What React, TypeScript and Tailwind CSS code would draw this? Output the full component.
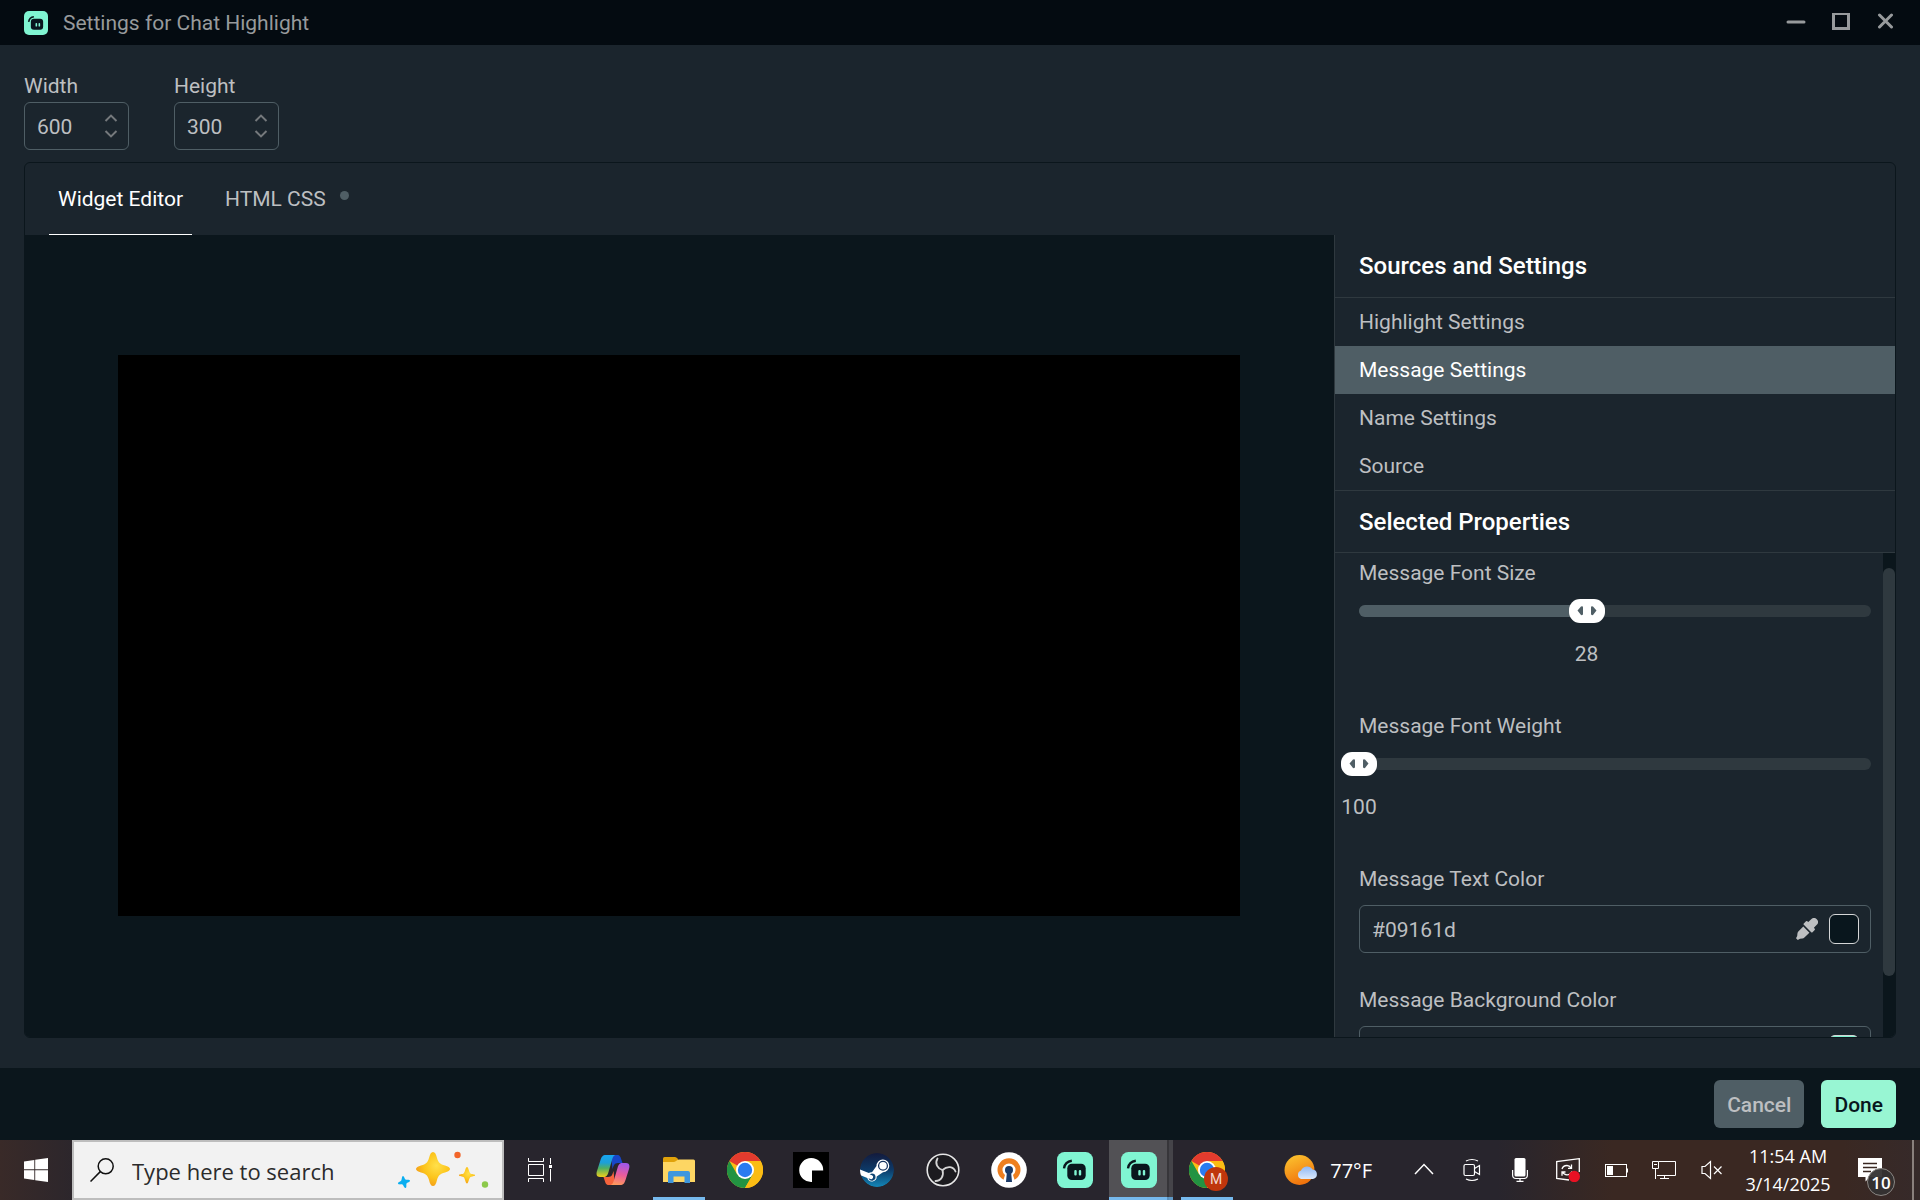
import React, { useState } from 'react';

type TabId = 'editor' | 'code';

const SOURCES = ['Highlight Settings', 'Message Settings', 'Name Settings', 'Source'];

const StreamlabsIcon: React.FC<{ className?: string }> = ({ className }) => (
  <svg viewBox="0 0 36 36" className={className} aria-hidden="true">
    <rect width="36" height="36" rx="7.5" fill="#80f5d2" />
    <path d="M7 16.4C7.6 12 10.400 9.200 14.800 8.700" fill="none" stroke="#09161d" strokeWidth="2.4" />
    <rect x="10.300" y="11.700" width="18.400" height="16.400" rx="4.600" fill="#09161d" />
    <rect x="17.300" y="18" width="2.400" height="5.400" rx="1" fill="#80f5d2" />
    <rect x="21.800" y="18" width="2.400" height="5.400" rx="1" fill="#80f5d2" />
  </svg>
);

const ChromeIcon: React.FC = () => (
  <svg viewBox="0 0 36 36" className="size-9" aria-hidden="true">
    <circle cx="18" cy="18" r="18" fill="#fbbc14" />
    <path d="M18 18 2.410 9A18 18 0 0 1 33.590 9Z" fill="#e33b2e" />
    <path d="M2.410 9A18 18 0 0 0 18 36L25.800 22.500 18 18 10.200 22.500Z" fill="#229342" />
    <path d="M18 9H33.590A18 18 0 0 1 18 36L25.800 22.500Z" fill="#fbbc14" />
    <circle cx="18" cy="18" r="9" fill="#fff" />
    <circle cx="18" cy="18" r="7.200" fill="#2a7bf0" />
  </svg>
);

const TitleBar: React.FC = () => (
  <header className="flex h-[45px] items-center bg-[#040b11] px-6 text-[#979a9c]">
    <StreamlabsIcon className="mr-[15px] size-6" />
    <h1 className="flex-1 leading-6">Settings for Chat Highlight</h1>
    <div className="flex items-center gap-[25px]">
      <button type="button" aria-label="Minimize">
        <svg viewBox="0 0 20 20" className="size-5" aria-hidden="true">
          <path d="M2 9H18" stroke="currentColor" strokeWidth="3" strokeLinecap="round" />
        </svg>
      </button>
      <button type="button" aria-label="Maximize">
        <svg viewBox="0 0 20 20" className="size-5" aria-hidden="true">
          <rect x="2.500" y="0.500" width="15" height="15" fill="none" stroke="currentColor" strokeWidth="3" />
        </svg>
      </button>
      <button type="button" aria-label="Close">
        <svg viewBox="0 0 20 20" className="size-5" aria-hidden="true">
          <path d="M3.500 2 15.500 14M15.500 2 3.500 14" stroke="currentColor" strokeWidth="3" strokeLinecap="round" />
        </svg>
      </button>
    </div>
  </header>
);

interface SizeFieldProps {
  id: string;
  label: string;
  value: number;
  onChange: (value: number) => void;
}

const SizeField: React.FC<SizeFieldProps> = ({ id, label, value, onChange }) => (
  <div className="w-[105px]">
    <label htmlFor={id} className="block h-6 leading-6">{label}</label>
    <div className="mt-1 flex h-12 items-center rounded-md border border-[#4f5e65] pr-[10px] pl-3">
      <input
        id={id}
        type="text"
        inputMode="numeric"
        value={value}
        onChange={(e) => onChange(Number(e.target.value) || 0)}
        className="w-0 flex-1 bg-transparent pt-px outline-none"
      />
      <div className="flex flex-col gap-2 text-[#75797c]">
        <button type="button" aria-label={`Increase ${label}`} onClick={() => onChange(value + 1)}>
          <svg viewBox="0 0 14 8" className="h-2 w-[14px]" aria-hidden="true">
            <path d="M1.500 7 7 1.600 12.500 7" fill="none" stroke="currentColor" strokeWidth="2" />
          </svg>
        </button>
        <button type="button" aria-label={`Decrease ${label}`} onClick={() => onChange(value - 1)}>
          <svg viewBox="0 0 14 8" className="h-2 w-[14px]" aria-hidden="true">
            <path d="M1.500 1 7 6.400 12.500 1" fill="none" stroke="currentColor" strokeWidth="2" />
          </svg>
        </button>
      </div>
    </div>
  </div>
);

interface SliderFieldProps {
  id: string;
  label: string;
  min: number;
  max: number;
  step: number;
  value: number;
  onChange: (value: number) => void;
}

const SliderField: React.FC<SliderFieldProps> = ({ id, label, min, max, step, value, onChange }) => {
  const percent = `${((value - min) / (max - min)) * 100}%`;

  return (
    <div className="h-[153px]">
      <label htmlFor={id} className="block h-6 leading-6">{label}</label>
      <div className="relative mt-5 h-3 rounded-full bg-[#2f393f]">
        <div className="h-3 rounded-full bg-[#4f5e65]" style={{ width: percent }} />
        <div
          className="absolute -top-[6px] flex h-6 w-9 -translate-x-1/2 items-center justify-center rounded-[11px] bg-white"
          style={{ left: percent }}
        >
          <svg viewBox="0 0 20 10" className="h-[10px] w-5" aria-hidden="true">
            <path d="M0.500 4.500 4 0.500Q6 -0.500 6 1.500V8Q6 9.500 4 9ZM19.500 4.500 16 0.500Q14 -0.500 14 1.500V8Q14 9.500 16 9Z" fill="#4f5e65" />
          </svg>
        </div>
        <input
          id={id}
          type="range"
          min={min}
          max={max}
          step={step}
          value={value}
          onChange={(e) => onChange(Number(e.target.value))}
          className="absolute -inset-x-[18px] -top-[6px] h-6 cursor-pointer opacity-0"
        />
        <output
          htmlFor={id}
          className="absolute top-[37px] -translate-x-1/2 leading-6"
          style={{ left: percent }}
        >
          {value}
        </output>
      </div>
    </div>
  );
};

interface ColorFieldProps {
  id: string;
  label: string;
  value: string;
  onChange: (value: string) => void;
}

const ColorField: React.FC<ColorFieldProps> = ({ id, label, value, onChange }) => (
  <div className="h-[121px] shrink-0">
    <label htmlFor={id} className="block h-6 leading-6">{label}</label>
    <div className="mt-[14px] flex h-12 items-center rounded-md border border-[#4f5e65] pr-[11px] pl-3">
      <input
        id={id}
        type="text"
        value={value}
        onChange={(e) => onChange(e.target.value)}
        className="w-0 flex-1 bg-transparent pt-px outline-none"
      />
      <button type="button" aria-label={`Pick ${label}`} className="mr-[11px]">
        <svg viewBox="0 0 22 22" className="size-[22px]" aria-hidden="true" fill="#bdbfc1">
          <path d="M20.800 1.200A4 4 0 0 0 15.200 1.200L12.300 4.100 11.300 3.200Q10.600 2.700 10 3.300L7.800 5.500Q7.200 6.200 7.800 6.800L15.200 14.200Q15.900 14.800 16.500 14.200L18.700 12Q19.300 11.300 18.700 10.700L17.900 9.700 20.800 6.800A4 4 0 0 0 20.800 1.200Z" />
          <path d="M7.300 8.600 2.300 13.600Q1.500 14.500 1.400 15.700L1.200 18 0 20.200 1.800 22 4 20.800 6.400 20.500Q7.500 20.400 8.400 19.600L13.400 14.700Z" />
        </svg>
      </button>
      <button
        type="button"
        aria-label={`Open ${label} swatch`}
        className="size-[30px] rounded-md border border-[#d5d6d7]"
        style={{ backgroundColor: value }}
      />
    </div>
  </div>
);

const PropertiesPanel: React.FC = () => {
  const [selected, setSelected] = useState('Message Settings');
  const [fontSize, setFontSize] = useState(28);
  const [fontWeight, setFontWeight] = useState(100);
  const [textColor, setTextColor] = useState('#09161d');
  const [backgroundColor, setBackgroundColor] = useState('#80f5d2');

  return (
    <aside className="flex w-[30%] flex-col border-l border-[#2f393f] bg-[#1b252d]">
      <h2 className="flex h-[63px] shrink-0 items-center border-b border-[#2f393f] px-6 text-[24px] font-medium text-white">
        Sources and Settings
      </h2>
      <ul className="border-b border-[#2f393f]">
        {SOURCES.map((source) => (
          <li key={source}>
            <button
              type="button"
              onClick={() => setSelected(source)}
              className={
                source === selected
                  ? 'flex h-12 w-full items-center bg-[#4f5e65] px-6 text-white'
                  : 'flex h-12 w-full items-center px-6'
              }
            >
              {source}
            </button>
          </li>
        ))}
      </ul>
      <h2 className="flex h-[62px] shrink-0 items-center border-b border-[#2f393f] px-6 text-[24px] font-medium text-white">
        Selected Properties
      </h2>
      <div className="flex min-h-0 flex-1">
        <div className="flex-1 overflow-hidden pt-2 pr-3 pl-6">
          <SliderField id="font-size" label="Message Font Size" min={12} max={48} step={1} value={fontSize} onChange={setFontSize} />
          <SliderField id="font-weight" label="Message Font Weight" min={100} max={900} step={100} value={fontWeight} onChange={setFontWeight} />
          <ColorField id="text-color" label="Message Text Color" value={textColor} onChange={setTextColor} />
          <ColorField id="background-color" label="Message Background Color" value={backgroundColor} onChange={setBackgroundColor} />
        </div>
        <div className="w-3 bg-[#0b161c] pt-[15px]">
          <div className="h-[87%] rounded-full bg-[#2f393f]" />
        </div>
      </div>
    </aside>
  );
};

const Taskbar: React.FC = () => (
  <footer className="flex h-[60px] shrink-0 bg-[linear-gradient(90deg,#392a28_0%,#28252d_5%,#28252d_78%,#3a2822_84%,#3a2822_96%,#362a2a_100%)] font-['Open_Sans',sans-serif] text-white">
    <button type="button" aria-label="Start" className="flex w-[72px] items-center justify-center">
      <svg viewBox="0 0 24 24" className="size-6" fill="#fff" aria-hidden="true">
        <path d="M0 3.400 10.300 1.900V11.200H0ZM11.200 1.700 24 0V11.200H11.200ZM0 12.200H10.300V22L0 20.600ZM11.200 12.200H24V24L11.200 22.200Z" />
      </svg>
    </button>
    <div className="flex w-[432px] items-center border-2 border-[#bdbdbd] bg-[#f2f2f2] pr-[13px] pl-4">
      <svg viewBox="0 0 24 24" className="size-6" fill="none" stroke="#111" strokeWidth="1.500" aria-hidden="true">
        <circle cx="15.700" cy="8.300" r="7.500" />
        <path d="M10.300 13.600 0.500 23.500" />
      </svg>
      <input
        type="text"
        aria-label="Search"
        placeholder="Type here to search"
        className="ml-[18px] w-0 flex-1 bg-transparent pt-[2px] text-[22px] text-[#222] outline-none placeholder:text-[#2b2b2b]"
      />
      <svg viewBox="0 0 92 40" className="h-10 w-[92px]" aria-hidden="true">
        <defs>
          <radialGradient id="spark" cx="0.600" cy="0.400" r="0.600">
            <stop offset="0" stopColor="#ffe04a" />
            <stop offset="0.600" stopColor="#fcc51c" />
            <stop offset="1" stopColor="#f5a31a" />
          </radialGradient>
        </defs>
        <path d="M36 2C38 2 39 4 40 8 41.500 13 43 14 48 15.500 51 16.500 53 17.500 53 19 53 20.500 51 21.500 48 22.500 43 24 41.500 25 40 30 39 34 38 36 36 36S33 34 32 30C30.500 25 29 24 24 22.500 21 21.500 19 20.500 19 19S21 16.500 24 15.500C29 14 30.500 13 32 8 33 4 34 2 36 2Z" fill="url(#spark)" />
        <path d="M70 17C71.500 17 72 22 73.200 23.200S78 24 78 25.200 74.500 26 73.200 27.300 71.500 33.500 70 33.500 68 28.500 66.800 27.300 62 26.500 62 25.200 65.500 24.500 66.800 23.200 68.500 17 70 17Z" fill="url(#spark)" />
        <path d="M6 26C7.200 26 7.500 29 8.500 29.500S12.500 29 13 30.500 10 32.500 9.500 33.500 10 37.500 8.600 38 6.500 35 5.500 34.500 1.500 35 1 33.600 3.800 31.500 4.300 30.500 4.800 26 6 26Z" fill="#0aaef0" />
        <circle cx="60.500" cy="5" r="3.200" fill="#f2652a" />
        <circle cx="88" cy="34.500" r="3.200" fill="#8cc94b" />
      </svg>
    </div>
    <button type="button" aria-label="Task view" className="mr-1 flex w-[72px] items-center justify-center">
      <svg viewBox="0 0 24 24" className="size-6" fill="none" stroke="#fff" aria-hidden="true">
        <path d="M0.500 0V3.500H15.500V0M0.500 24V20.500H15.500V24M0.500 6.500H15.500V17.500H0.500ZM22.500 0V6M22.500 11V23.500" />
        <rect x="21" y="7" width="3" height="3" fill="#fff" stroke="none" />
      </svg>
    </button>

    <button type="button" aria-label="Copilot" className="flex w-[66px] items-center justify-center">
      <svg viewBox="0 0 34 32" className="h-8 w-[34px]" aria-hidden="true">
        <defs>
          <linearGradient id="copLeft" x1="0" y1="0" x2="0" y2="1">
            <stop offset="0" stopColor="#18a5f0" />
            <stop offset="0.350" stopColor="#1c9fd8" />
            <stop offset="0.600" stopColor="#4fae62" />
            <stop offset="1" stopColor="#f0cf1a" />
          </linearGradient>
          <linearGradient id="copRight" x1="0.500" y1="0" x2="0.300" y2="1">
            <stop offset="0" stopColor="#a258e8" />
            <stop offset="0.500" stopColor="#ea5c9c" />
            <stop offset="1" stopColor="#ff9a5a" />
          </linearGradient>
        </defs>
        <path d="M15 1H21C24 1 24.500 3 25.500 6L26.500 9H22C18 9 17.500 12 16.500 15Z" fill="#1746c8" />
        <path d="M19 31H13C10 31 9.500 29 8.500 26L7.500 23H12C16 23 16.500 20 17.500 17Z" fill="#f5633c" />
        <path d="M10 1H20C17.500 1 16.800 3.500 16 6L12.500 18C11.500 21.500 10.500 23 7.500 23H4C0.500 23 0 20 1 17L4.500 6C5.500 3 6.500 1 10 1Z" fill="url(#copLeft)" />
        <path d="M24 31H14C16.500 31 17.200 28.500 18 26L21.500 14C22.500 10.500 23.500 9 26.500 9H30C33.500 9 34 12 33 15L29.500 26C28.500 29 27.500 31 24 31Z" fill="url(#copRight)" />
      </svg>
    </button>
    <button type="button" aria-label="File Explorer" className="relative flex w-[66px] items-center justify-center">
      <svg viewBox="0 0 32 27" className="h-[27px] w-8" aria-hidden="true">
        <path d="M0 1.500Q0 0 1.500 0H12Q13.500 0 14.500 1.500L16 4V6H0Z" fill="#e0a20a" />
        <path d="M0 5H10.500Q12 5 13 4 14.500 2.500 16 2.500H30.500Q32 2.500 32 4V25H0Z" fill="#fdd663" />
        <path d="M5 26V16Q5 14 7 14H25Q27 14 27 16V26H21.500V19.500H10.500V26Z" fill="#3f97dd" />
      </svg>
      <span className="absolute bottom-0 h-[3px] w-[52px] bg-[#76b9ed]" />
    </button>
    <button type="button" aria-label="Google Chrome" className="flex w-[66px] items-center justify-center">
      <ChromeIcon />
    </button>
    <button type="button" aria-label="Recorder" className="flex w-[66px] items-center justify-center">
      <svg viewBox="0 0 36 36" className="size-9" aria-hidden="true">
        <rect width="36" height="36" fill="#000" />
        <path d="M19 18.500H30.200A12 12 0 1 0 19 30Z" fill="#fff" />
      </svg>
    </button>
    <button type="button" aria-label="Steam" className="flex w-[66px] items-center justify-center">
      <svg viewBox="0 0 34 34" className="size-[34px]" aria-hidden="true">
        <defs>
          <linearGradient id="steam" x1="0" y1="0" x2="0" y2="1">
            <stop offset="0" stopColor="#131a3c" />
            <stop offset="0.500" stopColor="#0d3a68" />
            <stop offset="1" stopColor="#1387b8" />
          </linearGradient>
          <clipPath id="steamClip"><circle cx="17" cy="17" r="17" /></clipPath>
        </defs>
        <g clipPath="url(#steamClip)">
          <circle cx="17" cy="17" r="17" fill="url(#steam)" />
          <path d="M0 16.500 8.800 20Q10.400 19 12 19.300L16.500 13A6.400 6.400 0 1 1 23 19.200L16.700 23.500A4.800 4.800 0 0 1 7.300 25L0 22Z" fill="#fff" />
          <circle cx="23" cy="12.800" r="4.400" fill="#fff" stroke="#17345f" strokeWidth="1.300" />
          <path d="M9.500 21.300 12 22.300A2 2 0 0 1 10.500 26L8.500 25.200A3.600 3.600 0 1 0 12 20.500Z" fill="#0f4674" />
        </g>
      </svg>
    </button>
    <button type="button" aria-label="OBS Studio" className="flex w-[66px] items-center justify-center">
      <svg viewBox="0 0 34 34" className="size-[34px]" fill="none" aria-hidden="true">
        <circle cx="17" cy="17" r="15.800" fill="#1c1b1f" stroke="#e6e6e6" strokeWidth="1.600" />
        <g stroke="#d5d5d5" strokeWidth="1.800" strokeLinecap="round">
          <path d="M16.500 17C11.500 15.500 8.500 10.500 11.500 5.500" />
          <path d="M16.500 17C21.500 12.500 27.500 13.500 29.500 18.500" />
          <path d="M16.500 17C18 22.500 15.500 28 9.500 28" />
        </g>
      </svg>
    </button>
    <button type="button" aria-label="OpenVPN" className="flex w-[66px] items-center justify-center">
      <svg viewBox="0 0 36 36" className="size-9" aria-hidden="true">
        <circle cx="18" cy="18" r="17.800" fill="#fff" />
        <path d="M12.500 27.800A11.500 11.500 0 1 1 23.500 27.800L22 23A6.500 6.500 0 1 0 14 23Z" fill="#ee7f1f" />
        <circle cx="18" cy="18" r="4" fill="#1c3b68" />
        <path d="M16 19H20L21 30H15Z" fill="#1c3b68" />
      </svg>
    </button>
    <button type="button" aria-label="Streamlabs" className="flex w-[66px] items-center justify-center">
      <StreamlabsIcon className="size-9" />
    </button>
    <button type="button" aria-label="Streamlabs, 2 windows" className="flex w-[66px]">
      <span className="ml-px flex h-full w-[58px] items-center justify-center border-b-[3px] border-[#76b9ed] bg-[#525155] pt-[3px] pl-[2px]">
        <StreamlabsIcon className="size-9" />
      </span>
      <span className="h-full w-[2px] border-b-[3px] border-[#5a8fba] bg-[#37363a]" />
      <span className="h-full w-1 border-b-[3px] border-[#5f9ac8] bg-[#454449]" />
    </button>
    <button type="button" aria-label="Google Chrome, profile M" className="relative flex w-[66px] items-center justify-center">
      <ChromeIcon />
      <span className="absolute top-[27px] left-[30px] flex size-6 items-center justify-center rounded-full bg-[#bf360c] font-[Roboto] text-[14px] leading-none text-[#f3d9d0]">
        M
      </span>
      <span className="absolute bottom-0 h-[3px] w-[52px] bg-[#76b9ed]" />
    </button>

    <div className="ml-auto flex items-center">
      <button type="button" className="mr-7 flex items-center gap-3 text-[20px]">
        <svg viewBox="0 0 34 32" className="h-8 w-[34px]" aria-hidden="true">
          <defs>
            <linearGradient id="sun" x1="0.300" y1="0" x2="0.700" y2="1">
              <stop offset="0" stopColor="#fbc02d" />
              <stop offset="1" stopColor="#ef6c0a" />
            </linearGradient>
            <linearGradient id="cloud" x1="0" y1="0" x2="0" y2="1">
              <stop offset="0" stopColor="#8fb8f5" />
              <stop offset="1" stopColor="#dce9fb" />
            </linearGradient>
          </defs>
          <circle cx="15.500" cy="16" r="15" fill="url(#sun)" />
          <path d="M17 25A4.500 4.500 0 0 1 17 16.500 6.500 6.500 0 0 1 28.500 15.500 4.800 4.800 0 0 1 29 25Z" fill="url(#cloud)" />
        </svg>
        <span className="pt-[2px]">77°F</span>
      </button>
      <button type="button" aria-label="Show hidden icons" className="flex w-12 justify-center">
        <svg viewBox="0 0 20 24" className="h-6 w-5" fill="none" stroke="#fff" strokeWidth="1.500" aria-hidden="true">
          <path d="M1 16 10 6.500 19 16" />
        </svg>
      </button>
      <button type="button" aria-label="Meet Now" className="flex w-12 justify-center">
        <svg viewBox="0 0 18 24" className="h-6 w-[18px]" fill="none" stroke="#fff" strokeWidth="1.200" aria-hidden="true">
          <rect x="1" y="6.500" width="10.500" height="11" rx="1.500" />
          <path d="M11.500 10.500 16.500 7.500V16.500L11.500 13.500M3 3Q9 0 15 3M3 21Q9 24 15 21" />
        </svg>
      </button>
      <button type="button" aria-label="Microphone" className="flex w-12 justify-center">
        <svg viewBox="0 0 16 24" className="h-6 w-4" fill="none" stroke="#fff" strokeWidth="1.200" aria-hidden="true">
          <rect x="2.500" y="0" width="11" height="18.500" rx="1.500" fill="#fff" stroke="none" />
          <path d="M0.600 12V17Q0.600 20.500 4 20.500H12Q15.400 20.500 15.400 17V12M8 20.500V23.500M4.500 23.400H11.500" />
        </svg>
      </button>
      <button type="button" aria-label="Updates" className="flex w-12 justify-center">
        <svg viewBox="0 0 24 24" className="size-6" fill="none" stroke="#fff" strokeWidth="1.300" aria-hidden="true">
          <path d="M13 22 0.700 20.500V3.500L23.300 0.700V14M6 11Q7 7.500 11 7.500 13.500 7.500 15 10M15.500 6.500V10.300H12M16 13.500Q14.500 16.800 11 16.800 8 16.800 6.500 14M6 17.800V14H9.500" />
          <circle cx="18.300" cy="18.500" r="5.700" fill="#e81123" stroke="none" />
        </svg>
      </button>
      <button type="button" aria-label="Battery" className="flex w-12 justify-center">
        <svg viewBox="0 0 24 24" className="size-6" fill="none" stroke="#fff" aria-hidden="true">
          <rect x="1.500" y="6.500" width="21" height="12" />
          <path d="M23.500 10.500V14.500" />
          <rect x="3" y="8" width="6" height="9" fill="#fff" stroke="none" />
        </svg>
      </button>
      <button type="button" aria-label="Network" className="flex w-12 justify-center">
        <svg viewBox="0 0 24 24" className="size-6" fill="none" stroke="#fff" aria-hidden="true">
          <path d="M6.500 3.500H23.500V17.500H5M0.500 3.500H6.500V10.500H0.500ZM3.500 10.500V21M2 6.500H5M12.500 17.500V20.500M8 20.500H17" />
        </svg>
      </button>
      <button type="button" aria-label="Volume muted" className="flex w-12 justify-center">
        <svg viewBox="0 0 22 24" className="h-6 w-[22px]" fill="none" stroke="#fff" strokeWidth="1.200" aria-hidden="true">
          <path d="M1 8.500H4L9.500 3.500V20.500L4 15.500H1ZM13 8.500 20.500 16M20.500 8.500 13 16" />
        </svg>
      </button>
      <button type="button" className="w-[104px] text-center text-[18px] leading-7">
        <span className="block">11:54 AM</span>
        <span className="block">3/14/2025</span>
      </button>
      <button type="button" aria-label="Notifications" className="relative flex w-[60px] justify-center">
        <svg viewBox="0 0 24 24" className="size-6" aria-hidden="true">
          <path d="M0 0H24V19H12L7.500 23.500V19H0Z" fill="#fff" />
          <path d="M5 5.500H19M5 9.500H19M5 13.500H13" stroke="#3a2822" strokeWidth="1.300" />
        </svg>
        <span className="absolute top-[10px] left-[27px] flex size-7 items-center justify-center rounded-full border border-[#8b8784] bg-[#343231]/95 text-[17px] leading-none font-semibold">
          10
        </span>
      </button>
      <span className="mr-[6px] ml-3 h-[60px] w-[2px] bg-[#8a807d]" />
    </div>
  </footer>
);

const App: React.FC = () => {
  const [width, setWidth] = useState(600);
  const [height, setHeight] = useState(300);
  const [tab, setTab] = useState<TabId>('editor');

  return (
    <div className="flex h-screen flex-col bg-[#1b252d] font-[Roboto,sans-serif] text-[21px] leading-8 text-[#bdbfc1]">
      <TitleBar />
      <main className="flex min-h-0 flex-1 flex-col px-6 pt-[29px] pb-[30px]">
        <div className="flex gap-[45px]">
          <SizeField id="widget-width" label="Width" value={width} onChange={setWidth} />
          <SizeField id="widget-height" label="Height" value={height} onChange={setHeight} />
        </div>
        <section className="mt-3 flex min-h-0 flex-1 flex-col overflow-hidden rounded-md border border-[#0b161c]">
          <nav className="flex h-[72px] shrink-0 gap-6 px-6">
            <button
              type="button"
              onClick={() => setTab('editor')}
              className={
                tab === 'editor'
                  ? 'border-b border-white px-[9px] pt-px text-white'
                  : 'border-b border-transparent px-[9px] pt-px'
              }
            >
              Widget Editor
            </button>
            <button
              type="button"
              onClick={() => setTab('code')}
              className={
                tab === 'code'
                  ? 'flex items-center border-b border-white px-[9px] pt-px text-white'
                  : 'flex items-center border-b border-transparent px-[9px] pt-px'
              }
            >
              HTML CSS
              <span className="mb-[7px] ml-[14px] size-[9px] rounded-full bg-[#4f5e65]" />
            </button>
          </nav>
          <div className="flex min-h-0 flex-1">
            <div className="flex flex-1 items-center justify-center bg-[#0b161c] pr-px pb-px">
              <div className="aspect-[2/1] w-6/7 bg-black" />
            </div>
            <PropertiesPanel />
          </div>
        </section>
      </main>
      <div className="flex h-[72px] shrink-0 items-center justify-end gap-[17px] bg-[#0b161c] px-6 font-medium">
        <button type="button" className="h-12 rounded-md bg-[#4f5e65] px-[13px] pt-px">Cancel</button>
        <button type="button" className="h-12 rounded-md bg-[#98f6d3] px-[13px] pt-px text-[#09161d]">Done</button>
      </div>
      <Taskbar />
    </div>
  );
};

export default App;
